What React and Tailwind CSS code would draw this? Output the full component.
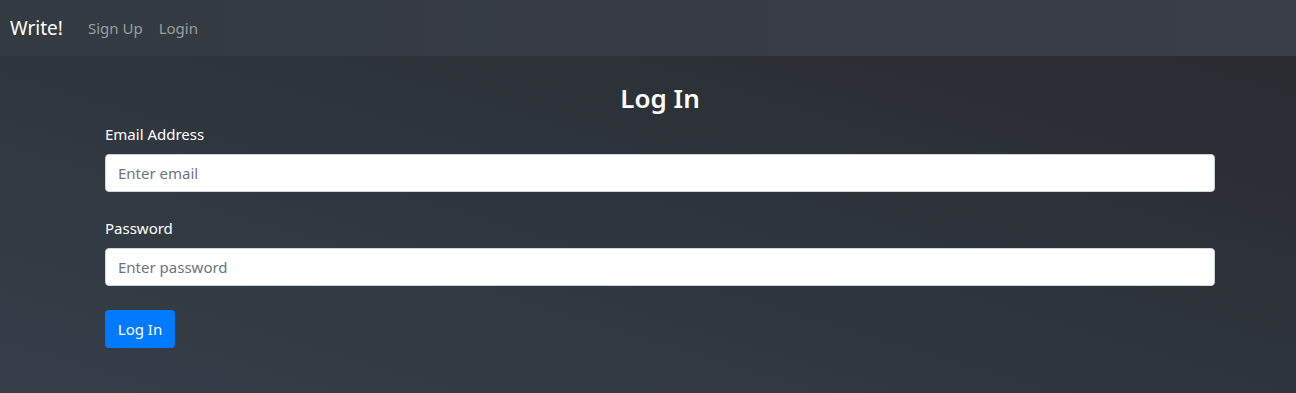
import React, { useState } from 'react';

const App = () => {
  const [email, setEmail] = useState('');
  const [password, setPassword] = useState('');

  return (
    <div className="min-h-screen flex flex-col bg-gradient-to-tr from-[#353f49] to-[#282a2f] font-['Noto_Sans',sans-serif] text-white">
      {/* Navbar */}
      <nav className="h-14 flex items-center px-[10px] bg-gradient-to-r from-[#343a41] to-[#3a3e47]">
        <span className="text-[19px] leading-[30px] mr-[25px]">Write!</span>
        <a href="#" className="text-[15px] text-[#9a9da2] mr-[16px]">Sign Up</a>
        <a href="#" className="text-[15px] text-[#9a9da2]">Login</a>
      </nav>

      {/* Login form */}
      <div className="ml-[105px] w-[1110px] pt-[22px]">
        <h2 className="text-center text-[26px] font-semibold leading-[40px] mb-[4px]">Log In</h2>
        <form onSubmit={(e) => e.preventDefault()}>
          <div className="mb-[12px]">
            <label className="block text-[15px] leading-[24px] mb-[8px]">Email Address</label>
            <input
              type="email"
              value={email}
              onChange={(e) => setEmail(e.target.value)}
              placeholder="Enter email"
              className="w-full h-[38px] bg-white border border-[#ced4da] rounded px-3 text-[15px] text-[#495057] placeholder:text-[#6c757d] focus:outline-none"
            />
          </div>
          <div className="pt-[12px] mb-[24px]">
            <label className="block text-[15px] leading-[24px] mb-[8px]">Password</label>
            <input
              type="password"
              value={password}
              onChange={(e) => setPassword(e.target.value)}
              placeholder="Enter password"
              className="w-full h-[38px] bg-white border border-[#ced4da] rounded px-3 text-[15px] text-[#495057] placeholder:text-[#6c757d] focus:outline-none"
            />
          </div>
          <button
            type="submit"
            className="h-[38px] w-[70px] bg-[#007bff] rounded text-[15px] text-white"
          >
            Log In
          </button>
        </form>
      </div>
    </div>
  );
};

export default App;
